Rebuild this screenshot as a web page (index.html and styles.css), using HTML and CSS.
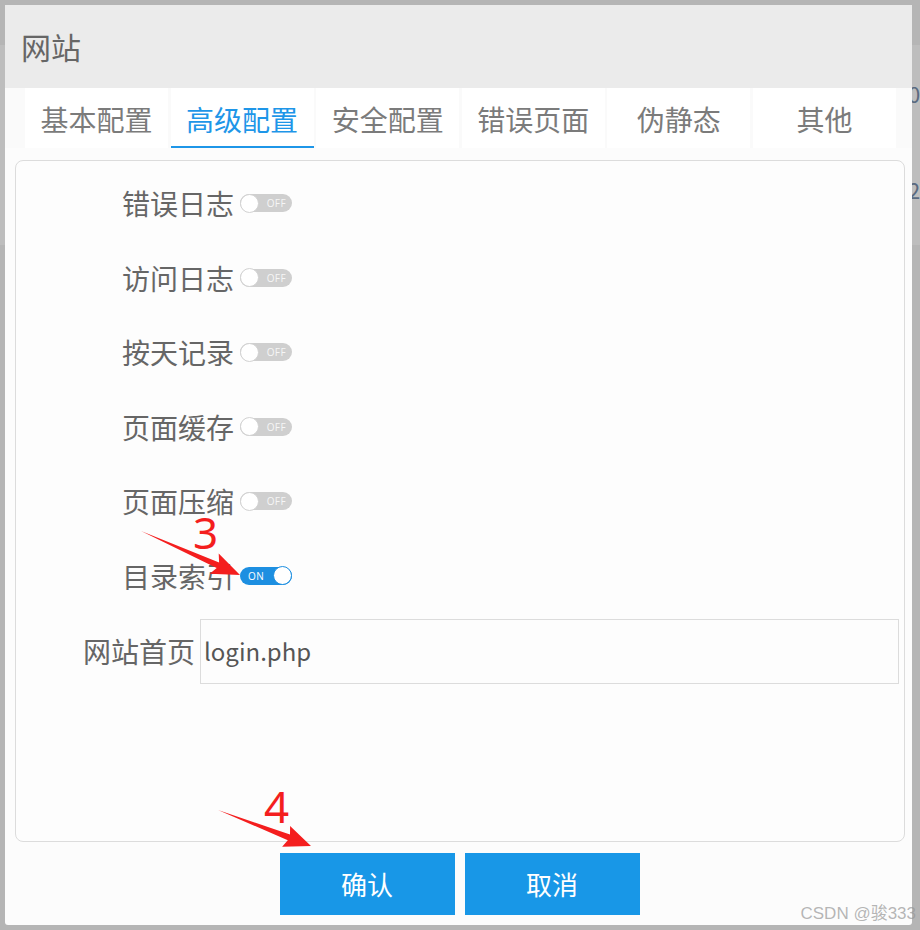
FILE: index.html
```html
<!DOCTYPE html>
<html lang="zh-CN">
<head>
<meta charset="utf-8">
<title>网站</title>
<link rel="stylesheet" href="styles.css">
</head>
<body>
<div class="backdrop">
  <span class="bg-num bg-num-a">0</span>
  <span class="bg-num bg-num-b">2</span>
  <div class="bg-band"></div>
</div>

<div class="dialog">
  <div class="dialog-title">网站</div>

  <div class="tabs">
    <div class="tab">基本配置</div>
    <div class="tab active">高级配置</div>
    <div class="tab">安全配置</div>
    <div class="tab">错误页面</div>
    <div class="tab">伪静态</div>
    <div class="tab">其他</div>
  </div>

  <div class="panel">
    <div class="row">
      <label class="label">错误日志</label>
      <span class="switch"><span class="switch-text">OFF</span><span class="knob"></span></span>
    </div>
    <div class="row">
      <label class="label">访问日志</label>
      <span class="switch"><span class="switch-text">OFF</span><span class="knob"></span></span>
    </div>
    <div class="row">
      <label class="label">按天记录</label>
      <span class="switch"><span class="switch-text">OFF</span><span class="knob"></span></span>
    </div>
    <div class="row">
      <label class="label">页面缓存</label>
      <span class="switch"><span class="switch-text">OFF</span><span class="knob"></span></span>
    </div>
    <div class="row">
      <label class="label">页面压缩</label>
      <span class="switch"><span class="switch-text">OFF</span><span class="knob"></span></span>
    </div>
    <div class="row">
      <label class="label">目录索引</label>
      <span class="switch on"><span class="switch-text">ON</span><span class="knob"></span></span>
    </div>
    <div class="row row-input">
      <label class="label label-short">网站首页</label>
      <div class="input">login.php</div>
    </div>
  </div>

  <div class="actions">
    <button class="btn">确认</button>
    <button class="btn">取消</button>
  </div>
</div>

<svg class="marks" width="920" height="930" viewBox="0 0 920 930">
  <polygon points="141,531 219.1,562.5 218.7,553.5 240,575 209.7,573.7 216.7,567.9" fill="#f41e1e"/>
  <text x="193" y="549" class="mark-num">3</text>
  <polygon points="218,810 290,834.6 290.1,826.1 311,846 282.1,846.7 287.8,840.2" fill="#f41e1e"/>
  <text x="264" y="823" class="mark-num">4</text>
</svg>

<div class="watermark">CSDN @骏333</div>
</body>
</html>
```

FILE: styles.css
```css
* {
  box-sizing: border-box;
}

html, body {
  margin: 0;
  padding: 0;
}

body {
  width: 920px;
  height: 930px;
  overflow: hidden;
  position: relative;
  background: #b5b5b5;
  font-family: "Noto Sans CJK SC", "Noto Sans", sans-serif;
}

/* page underneath the modal */
.backdrop {
  position: absolute;
  inset: 0;
}

.bg-band {
  position: absolute;
  left: 0;
  top: 45px;
  width: 920px;
  height: 200px;
  background: #bdbdbd;
}

.bg-num {
  position: absolute;
  z-index: 1;
  left: 908px;
  font-size: 22px;
  color: #5a6a80;
  line-height: 1;
}

.bg-num-a { top: 82px; }
.bg-num-b { top: 178px; }

/* modal */
.dialog {
  position: absolute;
  left: 5px;
  top: 5px;
  width: 907px;
  height: 920px;
  background: #fcfcfc;
  border-radius: 0 0 3px 3px;
  display: flex;
  flex-direction: column;
  z-index: 2;
}

.dialog-title {
  height: 83px;
  background: #ebebeb;
  padding-left: 16px;
  font-size: 30px;
  line-height: 82px;
  color: #666;
}

.tabs {
  display: flex;
  gap: 2.6px;
  padding-left: 20px;
  height: 60px;
  background: #fafafa;
}

.tab {
  width: 143px;
  height: 60px;
  background: #fff;
  text-align: center;
  font-size: 28px;
  line-height: 62px;
  color: #7b7b7b;
}

.tab.active {
  color: #1e96e8;
  border-bottom: 2px solid #1e96e8;
}

.panel {
  margin: 12px 7px 0 10px;
  height: 682px;
  border: 1px solid #dcdcdc;
  border-radius: 8px;
  background: #fdfdfd;
  padding-top: 22px;
  display: flex;
  flex-direction: column;
  gap: 34.6px;
}

.row {
  display: flex;
  align-items: center;
  height: 40px;
}

.label {
  width: 218px;
  text-align: right;
  font-size: 28px;
  color: #666;
  line-height: 40px;
}

.label-short {
  width: 179px;
}

.switch {
  position: relative;
  margin-left: 6px;
  width: 52px;
  height: 18px;
  border-radius: 9px;
  background: #cfcfcf;
  display: flex;
  align-items: center;
  justify-content: flex-end;
  padding-right: 6px;
}

.switch-text {
  font-family: "Open Sans", "Noto Sans", sans-serif;
  font-size: 10px;
  color: #f6f6f6;
  letter-spacing: 0.4px;
  line-height: 1;
}

.knob {
  position: absolute;
  left: 0;
  top: -0.5px;
  width: 19px;
  height: 19px;
  border-radius: 50%;
  background: #fff;
  border: 1px solid #d2d2d2;
}

.switch.on {
  background: #1d8fe1;
  justify-content: flex-start;
  padding-left: 8px;
  padding-right: 0;
}

.switch.on .switch-text {
  color: #fff;
}

.switch.on .knob {
  left: auto;
  right: 0;
  border-color: #1d8fe1;
}

.row-input {
  height: 65px;
  margin-top: -12px;
}

.input {
  margin-left: 5px;
  width: 699px;
  height: 65px;
  border: 1px solid #dcdcdc;
  background: #fdfdfd;
  padding-left: 3px;
  font-size: 24px;
  line-height: 62px;
  color: #555;
}

.actions {
  display: flex;
  justify-content: center;
  gap: 10px;
  margin-top: 11px;
  padding-left: 2px;
}

.btn {
  width: 175px;
  height: 62px;
  border: 0;
  border-radius: 0;
  background: #1897e7;
  color: #fff;
  font-family: "Noto Sans CJK SC", sans-serif;
  font-size: 26px;
  padding: 0;
  line-height: 62px;
}

/* red annotation arrows and step numbers */
.marks {
  position: absolute;
  left: 0;
  top: 0;
  z-index: 3;
  pointer-events: none;
}

.mark-num {
  font-family: "Noto Sans", sans-serif;
  font-size: 44px;
  fill: #f41e1e;
}

.watermark {
  position: absolute;
  z-index: 4;
  right: 4px;
  bottom: 6px;
  font-family: "Liberation Sans", "Noto Sans CJK SC", sans-serif;
  font-size: 17px;
  color: rgba(150, 150, 150, 0.7);
}
```
